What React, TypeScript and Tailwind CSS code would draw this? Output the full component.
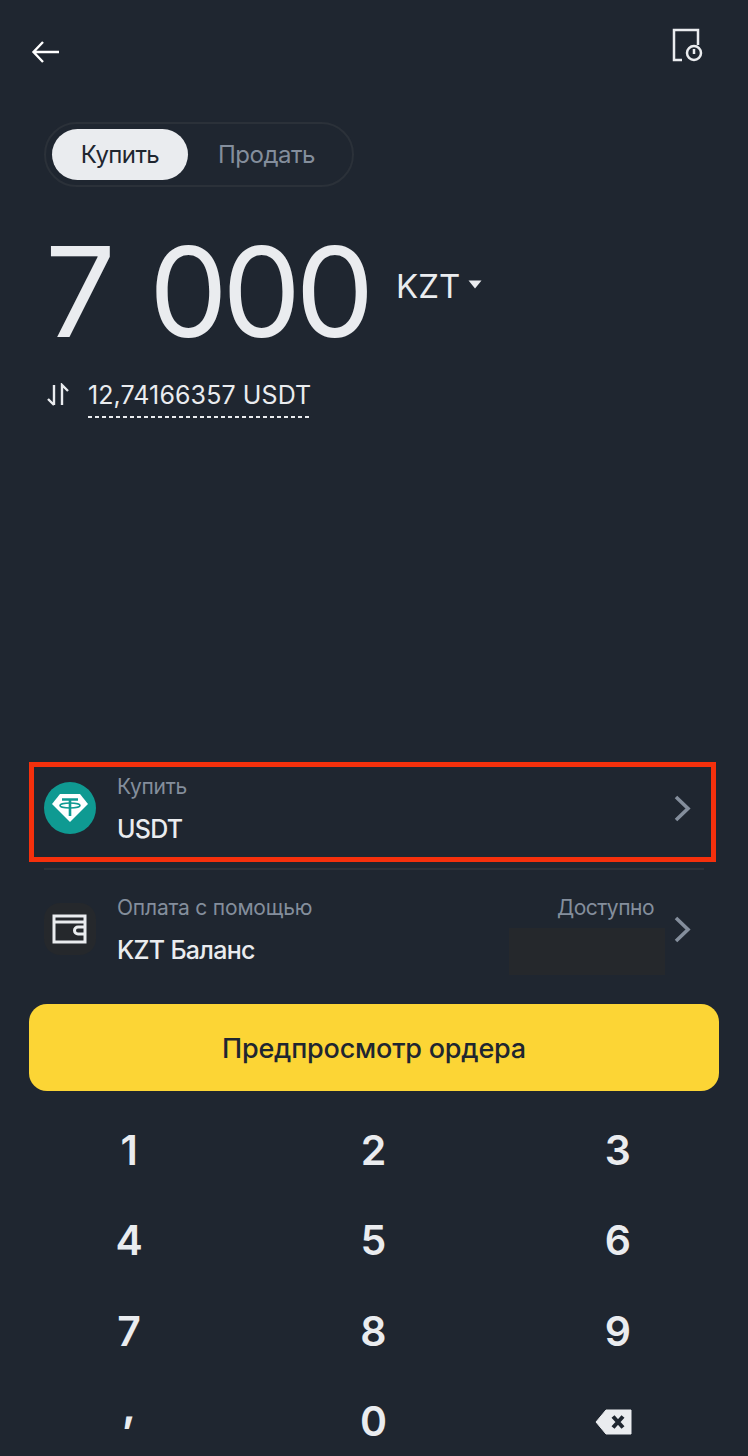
const KEYS = ['1', '2', '3', '4', '5', '6', '7', '8', '9'];

function Chevron() {
  return (
    <svg className="shrink-0" width="17" height="27" viewBox="0 0 17 27" fill="none" stroke="#848e9c" strokeWidth="3.600">
      <path d="M2 2L14 13.500L2 25" />
    </svg>
  );
}

function Backspace() {
  return (
    <svg className="-ml-[8px]" width="38" height="26" viewBox="0 0 38 26">
      <path d="M11 1H36V25H11L1 13Z" fill="#eaecef" stroke="#eaecef" strokeWidth="1" strokeLinejoin="round" />
      <path d="M18 7.500L28 18.500M28 7.500L18 18.500" stroke="#1f2630" strokeWidth="4" />
    </svg>
  );
}

function TetherIcon() {
  return (
    <div className="flex h-[52px] w-[52px] shrink-0 items-center justify-center rounded-full bg-[#0f9a92]">
      <svg width="38" height="30" viewBox="0 0 38 30">
        <path d="M9 1H29L37 11L19 29L1 11Z" fill="#fff" />
        <path d="M11 6.500H27M19 6.500V23" stroke="#0f9a92" strokeWidth="2.600" fill="none" />
        <ellipse cx="19" cy="12.500" rx="10" ry="2.500" stroke="#0f9a92" strokeWidth="1.600" fill="none" />
      </svg>
    </div>
  );
}

function WalletIcon() {
  return (
    <div className="flex h-[52px] w-[52px] shrink-0 items-center justify-center rounded-2xl bg-[#25282c]">
      <svg width="36" height="30" viewBox="0 0 36 30" fill="none" stroke="#eaecef" strokeWidth="3">
        <path d="M2 2H33V28H2ZM2 8H33" />
        <path d="M33 13H26A2.500 2.500 0 0 0 26 20H33" />
      </svg>
    </div>
  );
}

export default function App() {
  return (
    <div className="h-[1456px] w-[748px] overflow-hidden bg-[#1f2630] font-['Inter',sans-serif] text-[#eaecef]">
      {/* Header */}
      <div className="flex items-start justify-between pl-[30px] pr-[44px] pt-[28px]">
        <svg className="mt-[12px]" width="32" height="24" viewBox="0 0 32 24" fill="none" stroke="#fff" strokeWidth="2.400">
          <path d="M29 12H4M13 2L3.500 12L13 22" />
        </svg>
        <svg width="32" height="34" viewBox="0 0 32 34" fill="none" stroke="#eaecef" strokeWidth="2.500">
          <path d="M10 32H2V2H26V17" />
          <circle cx="22" cy="25" r="7" />
          <path d="M22 21V26" />
        </svg>
      </div>

      {/* Buy / sell tabs */}
      <div className="ml-[44px] mt-[58px] flex h-[65px] w-[310px] items-center rounded-full border-2 border-[#2b3139] pl-[6px]">
        <div className="flex h-[51px] w-[136px] items-center justify-center rounded-full bg-[#eaecef] text-[24px] tracking-[-0.6px] text-[#1f2630]">
          Купить
        </div>
        <div className="ml-[30px] text-[24px] tracking-[-0.5px] text-[#848e9c]">Продать</div>
      </div>

      {/* Amount */}
      <div className="ml-[45px] mt-[40px] flex h-[128px] items-center">
        <span className="text-[125px] font-normal leading-none tracking-[-5.500px] [word-spacing:9px]">7 000</span>
        <span className="mb-[8px] ml-[27px] text-[33px]">KZT</span>
        <svg className="mb-[14px] ml-[8px]" width="14" height="9" viewBox="0 0 14 9">
          <path d="M0.500 0.500H13.500L7 8.500Z" fill="#eaecef" />
        </svg>
      </div>

      {/* Converted value */}
      <div className="ml-[46px] mt-[24px] flex items-start">
        <svg className="mt-[4px]" width="24" height="24" viewBox="0 0 24 24" fill="none" stroke="#eaecef" strokeWidth="2.400">
          <path d="M8 2V22M2 16L8 22M16 22V2L22 8" />
        </svg>
        <div className="ml-[18px] w-[222px]">
          <div className="whitespace-nowrap text-[25px] leading-[32px] tracking-[0.1px]">12,74166357 USDT</div>
          <div className="mt-[5px] h-[2px] bg-[repeating-linear-gradient(90deg,#eaecef_0,#eaecef_4px,transparent_4px,transparent_7px)]" />
        </div>
      </div>

      {/* Buy row, marked with the red frame */}
      <div className="ml-[29px] mt-[344px] flex h-[100px] w-[687px] items-center border-[5px] border-[#f5300c] pb-[8px] pl-[10px] pr-[20px]">
        <TetherIcon />
        <div className="ml-[21px] flex-1">
          <div className="text-[21px] leading-[30px] tracking-[-0.3px] text-[#848e9c]">Купить</div>
          <div className="mt-[12px] text-[25px] font-medium leading-[30px] tracking-[-0.7px]">USDT</div>
        </div>
        <Chevron />
      </div>
      <div className="mx-[44px] mt-[6px] h-[2px] bg-[#2b3139]" />

      {/* Payment row */}
      <div className="ml-[44px] mr-[57px] mt-[8px] flex h-[102px] items-center">
        <WalletIcon />
        <div className="ml-[21px] flex-1">
          <div className="text-[21px] leading-[30px] tracking-[-0.2px] text-[#848e9c]">Оплата с помощью</div>
          <div className="mt-[12px] text-[25px] font-medium leading-[30px] tracking-[-0.7px]">KZT Баланс</div>
        </div>
        <div className="flex flex-col items-end">
          <div className="mr-[12px] mt-[10px] text-[21px] leading-[30px] tracking-[-0.5px] text-[#848e9c]">Доступно</div>
          <div className="mr-[1px] mt-[5px] h-[47px] w-[156px] bg-[#25282c]" />
        </div>
        <div className="ml-[8px]">
          <Chevron />
        </div>
      </div>

      {/* Preview button */}
      <button className="ml-[29px] mt-[24px] flex h-[87px] w-[690px] items-center justify-center rounded-[18px] bg-[#fcd535] pt-[3px] text-[27px] font-medium tracking-[-0.2px] text-[#1f2630]">
        Предпросмотр ордера
      </button>

      {/* Keypad */}
      <div className="ml-[7px] mt-[14px] grid w-[733px] grid-cols-3 text-center text-[41px] font-semibold">
        {KEYS.map((k) => (
          <div key={k} className="flex h-[90.500px] items-center justify-center">
            {k}
          </div>
        ))}
        <div className="flex h-[90.500px] items-center justify-center">
          <span className="-translate-y-[15px] font-bold">,</span>
        </div>
        <div className="flex h-[90.500px] items-center justify-center">0</div>
        <div className="flex h-[90.500px] items-center justify-center">
          <Backspace />
        </div>
      </div>
    </div>
  );
}
